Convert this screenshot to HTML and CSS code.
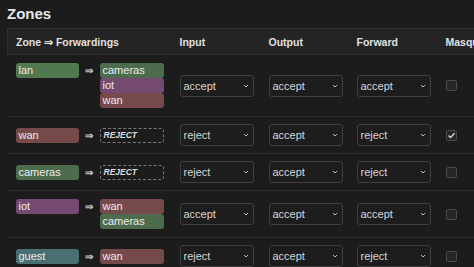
FILE: index.html
```html
<!DOCTYPE html>
<html lang="en">
<head>
    <meta charset="UTF-8">
    <title>Zones</title>
    <link rel="stylesheet" href="styles.css">
</head>
<body>
    <div class="section">
        <h2>Zones</h2>
        <table class="zones">
            <colgroup>
                <col class="c-zone"><col class="c-pol"><col class="c-pol2"><col class="c-pol"><col class="c-masq">
            </colgroup>
            <thead>
                <tr>
                    <th>Zone &rArr; Forwardings</th>
                    <th>Input</th>
                    <th>Output</th>
                    <th>Forward</th>
                    <th>Masquerading</th>
                </tr>
            </thead>
            <tbody>
                <tr>
                    <td>
                        <div class="fwd">
                            <span class="badge lan">lan</span>
                            <span class="arrow">&rArr;</span>
                            <div class="dests">
                                <span class="badge cameras">cameras</span>
                                <span class="badge iot">iot</span>
                                <span class="badge wan">wan</span>
                            </div>
                        </div>
                    </td>
                    <td><div class="select"><span>accept</span><svg width="6" height="4" viewBox="0 0 6 4"><path d="M1 1l2 2 2-2" fill="none" stroke="#bbb" stroke-width="1"/></svg></div></td>
                    <td><div class="select"><span>accept</span><svg width="6" height="4" viewBox="0 0 6 4"><path d="M1 1l2 2 2-2" fill="none" stroke="#bbb" stroke-width="1"/></svg></div></td>
                    <td><div class="select"><span>accept</span><svg width="6" height="4" viewBox="0 0 6 4"><path d="M1 1l2 2 2-2" fill="none" stroke="#bbb" stroke-width="1"/></svg></div></td>
                    <td><span class="check"></span></td>
                </tr>
                <tr>
                    <td>
                        <div class="fwd">
                            <span class="badge wan">wan</span>
                            <span class="arrow">&rArr;</span>
                            <div class="dests"><span class="reject">REJECT</span></div>
                        </div>
                    </td>
                    <td><div class="select"><span>reject</span><svg width="6" height="4" viewBox="0 0 6 4"><path d="M1 1l2 2 2-2" fill="none" stroke="#bbb" stroke-width="1"/></svg></div></td>
                    <td><div class="select"><span>accept</span><svg width="6" height="4" viewBox="0 0 6 4"><path d="M1 1l2 2 2-2" fill="none" stroke="#bbb" stroke-width="1"/></svg></div></td>
                    <td><div class="select"><span>reject</span><svg width="6" height="4" viewBox="0 0 6 4"><path d="M1 1l2 2 2-2" fill="none" stroke="#bbb" stroke-width="1"/></svg></div></td>
                    <td><span class="check checked"><svg width="9" height="9" viewBox="0 0 9 9"><path d="M1.5 4.6l2 2 4-4.4" fill="none" stroke="#ddd" stroke-width="1.4"/></svg></span></td>
                </tr>
                <tr>
                    <td>
                        <div class="fwd">
                            <span class="badge cameras">cameras</span>
                            <span class="arrow">&rArr;</span>
                            <div class="dests"><span class="reject">REJECT</span></div>
                        </div>
                    </td>
                    <td><div class="select"><span>reject</span><svg width="6" height="4" viewBox="0 0 6 4"><path d="M1 1l2 2 2-2" fill="none" stroke="#bbb" stroke-width="1"/></svg></div></td>
                    <td><div class="select"><span>accept</span><svg width="6" height="4" viewBox="0 0 6 4"><path d="M1 1l2 2 2-2" fill="none" stroke="#bbb" stroke-width="1"/></svg></div></td>
                    <td><div class="select"><span>reject</span><svg width="6" height="4" viewBox="0 0 6 4"><path d="M1 1l2 2 2-2" fill="none" stroke="#bbb" stroke-width="1"/></svg></div></td>
                    <td><span class="check"></span></td>
                </tr>
                <tr>
                    <td>
                        <div class="fwd">
                            <span class="badge iot">iot</span>
                            <span class="arrow">&rArr;</span>
                            <div class="dests">
                                <span class="badge wan">wan</span>
                                <span class="badge cameras">cameras</span>
                            </div>
                        </div>
                    </td>
                    <td><div class="select"><span>accept</span><svg width="6" height="4" viewBox="0 0 6 4"><path d="M1 1l2 2 2-2" fill="none" stroke="#bbb" stroke-width="1"/></svg></div></td>
                    <td><div class="select"><span>accept</span><svg width="6" height="4" viewBox="0 0 6 4"><path d="M1 1l2 2 2-2" fill="none" stroke="#bbb" stroke-width="1"/></svg></div></td>
                    <td><div class="select"><span>accept</span><svg width="6" height="4" viewBox="0 0 6 4"><path d="M1 1l2 2 2-2" fill="none" stroke="#bbb" stroke-width="1"/></svg></div></td>
                    <td><span class="check"></span></td>
                </tr>
                <tr>
                    <td>
                        <div class="fwd">
                            <span class="badge guest">guest</span>
                            <span class="arrow">&rArr;</span>
                            <div class="dests"><span class="badge wan">wan</span></div>
                        </div>
                    </td>
                    <td><div class="select"><span>reject</span><svg width="6" height="4" viewBox="0 0 6 4"><path d="M1 1l2 2 2-2" fill="none" stroke="#bbb" stroke-width="1"/></svg></div></td>
                    <td><div class="select"><span>accept</span><svg width="6" height="4" viewBox="0 0 6 4"><path d="M1 1l2 2 2-2" fill="none" stroke="#bbb" stroke-width="1"/></svg></div></td>
                    <td><div class="select"><span>reject</span><svg width="6" height="4" viewBox="0 0 6 4"><path d="M1 1l2 2 2-2" fill="none" stroke="#bbb" stroke-width="1"/></svg></div></td>
                    <td><span class="check"></span></td>
                </tr>
            </tbody>
        </table>
    </div>
</body>
</html>
```

FILE: styles.css
```css
body {
    margin: 0;
    background: #1c1c1c;
    color: #ddd;
    font-family: "Liberation Sans", Arial, sans-serif;
    overflow: hidden;
}
.section {
    padding: 6px 0 0 7px;
}
h2 {
    margin: 0 0 6px 0;
    font-size: 15px;
    font-weight: bold;
    color: #e6e6e6;
    line-height: 16px;
}
.zones {
    border-collapse: collapse;
    table-layout: fixed;
    width: 540px;
}
.c-zone { width: 164px; }
.c-pol { width: 89px; }
.c-pol2 { width: 88px; }
.c-masq { width: 110px; }
.zones th {
    background: #242424;
    border-top: 1px solid #303030;
    border-bottom: 1px solid #303030;
    height: 25px;
    padding: 0 8px;
    text-align: left;
    font-size: 10.5px;
    font-weight: bold;
    color: #e0e0e0;
    white-space: nowrap;
}
.zones th:first-child {
    border-left: 1px solid #303030;
}
.zones td {
    padding: 7px 8px;
    border-bottom: 1px solid #2e2e2e;
    vertical-align: middle;
}
.fwd {
    display: flex;
    align-items: flex-start;
    padding: 1px 0;
}
.arrow {
    width: 21px;
    text-align: center;
    font-size: 10px;
    font-weight: bold;
    line-height: 15px;
    color: #c4c4c4;
}
.dests {
    display: flex;
    flex-direction: column;
}
.badge {
    display: block;
    box-sizing: border-box;
    width: 64px;
    height: 15px;
    line-height: 15px;
    padding: 0 3px;
    border-radius: 3px;
    font-size: 11px;
    color: #ececec;
}
.lan { background: #52784f; }
.cameras { background: #4d6c4e; }
.iot { background: #744a72; }
.wan { background: #764a4b; }
.guest { background: #4a6f72; }
.reject {
    display: block;
    box-sizing: border-box;
    width: 64px;
    height: 15px;
    line-height: 13px;
    padding: 0 3px;
    border: 1px dashed #777;
    border-radius: 3px;
    font-size: 8.5px;
    font-weight: bold;
    font-style: italic;
    color: #ddd;
}
.select {
    box-sizing: border-box;
    width: 74px;
    height: 22px;
    display: flex;
    align-items: center;
    justify-content: space-between;
    padding: 0 4px 0 3px;
    border: 1px solid #3e3e3e;
    border-radius: 3px;
    background: #1d1d1d;
    font-size: 11px;
    color: #d6d6d6;
}
.check {
    box-sizing: border-box;
    display: flex;
    align-items: center;
    justify-content: center;
    width: 11px;
    height: 11px;
    border: 1px solid #4a4a4a;
    border-radius: 2px;
    background: #262626;
}
```
